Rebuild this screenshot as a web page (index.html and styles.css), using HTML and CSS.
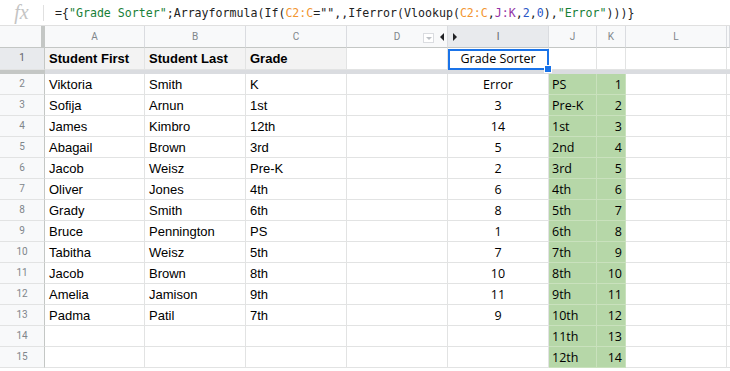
FILE: index.html
```html
<!DOCTYPE html>
<html>
<head>
<meta charset="utf-8">
<link rel="stylesheet" href="styles.css">
</head>
<body>
<div class="fbar">
  <span class="fx">fx</span>
  <span class="fsep"></span>
  <div class="formula">={<span class="str">"Grade Sorter"</span>;Arrayformula(If(<span class="r1">C2:C</span>="",,Iferror(Vlookup(<span class="r1">C2:C</span>,<span class="r2">J:K</span>,<span class="n">2</span>,<span class="n">0</span>),<span class="str">"Error"</span>)))}</div>
</div>
<div class="sheet">
  <div class="row hdr">
    <div class="corner"></div>
    <div>A</div><div>B</div><div>C</div>
    <div class="hd">D<span class="dd"></span><span class="al"></span></div>
    <div class="hi">I<span class="ar"></span></div>
    <div>J</div><div>K</div><div>L</div><div></div>
  </div>
  <div class="row r1row">
    <div class="rh rhs">1</div>
    <div class="b">Student First</div><div class="b">Student Last</div><div class="b">Grade</div>
    <div></div>
    <div class="ctr sel">Grade Sorter<span class="handle"></span></div>
    <div></div><div></div><div></div><div></div>
  </div>
  <div class="freeze"><div></div><div></div></div>
  <div class="row"><div class="rh">2</div><div>Viktoria</div><div>Smith</div><div>K</div><div></div><div class="ctr">Error</div><div class="g">PS</div><div class="g num">1</div><div></div><div></div></div>
  <div class="row"><div class="rh">3</div><div>Sofija</div><div>Arnun</div><div>1st</div><div></div><div class="ctr">3</div><div class="g">Pre-K</div><div class="g num">2</div><div></div><div></div></div>
  <div class="row"><div class="rh">4</div><div>James</div><div>Kimbro</div><div>12th</div><div></div><div class="ctr">14</div><div class="g">1st</div><div class="g num">3</div><div></div><div></div></div>
  <div class="row"><div class="rh">5</div><div>Abagail</div><div>Brown</div><div>3rd</div><div></div><div class="ctr">5</div><div class="g">2nd</div><div class="g num">4</div><div></div><div></div></div>
  <div class="row"><div class="rh">6</div><div>Jacob</div><div>Weisz</div><div>Pre-K</div><div></div><div class="ctr">2</div><div class="g">3rd</div><div class="g num">5</div><div></div><div></div></div>
  <div class="row"><div class="rh">7</div><div>Oliver</div><div>Jones</div><div>4th</div><div></div><div class="ctr">6</div><div class="g">4th</div><div class="g num">6</div><div></div><div></div></div>
  <div class="row"><div class="rh">8</div><div>Grady</div><div>Smith</div><div>6th</div><div></div><div class="ctr">8</div><div class="g">5th</div><div class="g num">7</div><div></div><div></div></div>
  <div class="row"><div class="rh">9</div><div>Bruce</div><div>Pennington</div><div>PS</div><div></div><div class="ctr">1</div><div class="g">6th</div><div class="g num">8</div><div></div><div></div></div>
  <div class="row"><div class="rh">10</div><div>Tabitha</div><div>Weisz</div><div>5th</div><div></div><div class="ctr">7</div><div class="g">7th</div><div class="g num">9</div><div></div><div></div></div>
  <div class="row"><div class="rh">11</div><div>Jacob</div><div>Brown</div><div>8th</div><div></div><div class="ctr">10</div><div class="g">8th</div><div class="g num">10</div><div></div><div></div></div>
  <div class="row"><div class="rh">12</div><div>Amelia</div><div>Jamison</div><div>9th</div><div></div><div class="ctr">11</div><div class="g">9th</div><div class="g num">11</div><div></div><div></div></div>
  <div class="row"><div class="rh">13</div><div>Padma</div><div>Patil</div><div>7th</div><div></div><div class="ctr">9</div><div class="g">10th</div><div class="g num">12</div><div></div><div></div></div>
  <div class="row"><div class="rh">14</div><div></div><div></div><div></div><div></div><div class="ctr"></div><div class="g">11th</div><div class="g num">13</div><div></div><div></div></div>
  <div class="row"><div class="rh">15</div><div></div><div></div><div></div><div></div><div class="ctr"></div><div class="g">12th</div><div class="g num">14</div><div></div><div></div></div>
</div>
</body>
</html>
```
FILE: styles.css
```css
html, body {
  margin: 0;
  padding: 0;
  background: #fff;
}
body {
  width: 730px;
  height: 371px;
  overflow: hidden;
  font-family: "Liberation Sans", Arial, sans-serif;
  color: #000;
}
.fbar {
  height: 26px;
  box-sizing: border-box;
  border-bottom: 1px solid #e0e0e0;
  display: flex;
  align-items: center;
}
.fx {
  width: 43px;
  text-align: center;
  font-family: "Liberation Serif", serif;
  font-style: italic;
  font-size: 20px;
  color: #c4c4c4;
  line-height: 25px;
}
.fsep {
  width: 1px;
  height: 16px;
  background: #e0e0e0;
}
.formula {
  margin-left: 11px;
  font-family: "DejaVu Sans Mono", monospace;
  font-size: 11.6px;
  color: #222;
  white-space: nowrap;
}
.formula .str { color: #188038; }
.formula .r1 { color: #f29631; }
.formula .r2 { color: #9334a6; }
.formula .n { color: #2a56c6; }

.sheet {
  display: flex;
  flex-direction: column;
}
.row {
  display: grid;
  grid-template-columns: 45px 100px 101px 101px 101px 101px 48px 29px 101px 3px;
  height: 21px;
}
.row > div {
  position: relative;
  box-sizing: border-box;
  border-right: 1px solid #e2e3e3;
  border-bottom: 1px solid #e2e3e3;
  padding: 2px 4px 0;
  line-height: 18px;
  font-size: 13px;
  white-space: nowrap;
  overflow: hidden;
}
.row > .rh {
  background: #f8f9fa;
  border-right: 1px solid #c4c7c5;
  border-bottom: 1px solid #e2e3e3;
  font-family: Roboto, "Liberation Sans", sans-serif;
  font-size: 10px;
  color: #80868b;
  text-align: center;
  padding: 1px 0 0;
}
.row > .rhs {
  background: #e8eaed;
  color: #5f6368;
}
.hdr {
  height: 22px;
}
.hdr > div {
  background: #f8f9fa;
  border-right: 1px solid #dadce0;
  border-bottom: 1px solid #c4c7c5;
  font-family: Roboto, "Liberation Sans", sans-serif;
  font-size: 10px;
  color: #80868b;
  text-align: center;
  padding: 1px 0 0;
  line-height: 20px;
}
.hdr > .corner {
  border-right: 4px solid #c4c7c5;
}
.hdr > .hi {
  background: #e8eaed;
  color: #5f6368;
  overflow: visible;
}
.hdr > .hd {
  overflow: visible;
}
.dd {
  position: absolute;
  left: 76px;
  top: 7px;
  width: 11px;
  height: 10px;
  box-sizing: border-box;
  border: 1px solid #dadce0;
  background: #fff;
}
.dd::after {
  content: "";
  position: absolute;
  left: 2px;
  top: 3px;
  border-left: 3px solid transparent;
  border-right: 3px solid transparent;
  border-top: 3px solid #bdc1c6;
}
.al {
  position: absolute;
  left: 93px;
  top: 7px;
  border-top: 4px solid transparent;
  border-bottom: 4px solid transparent;
  border-right: 4px solid #202124;
}
.ar {
  position: absolute;
  left: 5px;
  top: 7px;
  border-top: 4px solid transparent;
  border-bottom: 4px solid transparent;
  border-left: 4px solid #202124;
}
.r1row {
  height: 22px;
}
.r1row > .b {
  font-weight: bold;
  background: #f3f3f3;
}
.row > .ctr {
  text-align: center;
  font-family: "Open Sans", "Noto Sans", sans-serif;
  font-size: 12.5px;
}
.row > .sel {
  overflow: visible;
  z-index: 2;
}
.sel::after {
  content: "";
  position: absolute;
  left: 0;
  top: 1px;
  right: -1px;
  bottom: -1px;
  border: 2px solid #1a73e8;
  pointer-events: none;
}
.handle {
  position: absolute;
  right: -4px;
  bottom: -4px;
  width: 6px;
  height: 6px;
  background: #1a73e8;
  border: 1px solid #fff;
  z-index: 3;
}
.row > .g {
  background: #b6d7a8;
  border-right-color: #c9e1bd;
  border-bottom-color: #c9e1bd;
  font-family: "Open Sans", "Noto Sans", sans-serif;
  font-size: 12.5px;
  padding-left: 3px;
}
.row > .num {
  text-align: right;
  padding-right: 3px;
}
.freeze {
  display: grid;
  grid-template-columns: 45px 1fr;
  height: 4px;
}
.freeze > div:first-child {
  background: #c4c7c5;
}
.freeze > div:last-child {
  background: #dadce0;
}
```
